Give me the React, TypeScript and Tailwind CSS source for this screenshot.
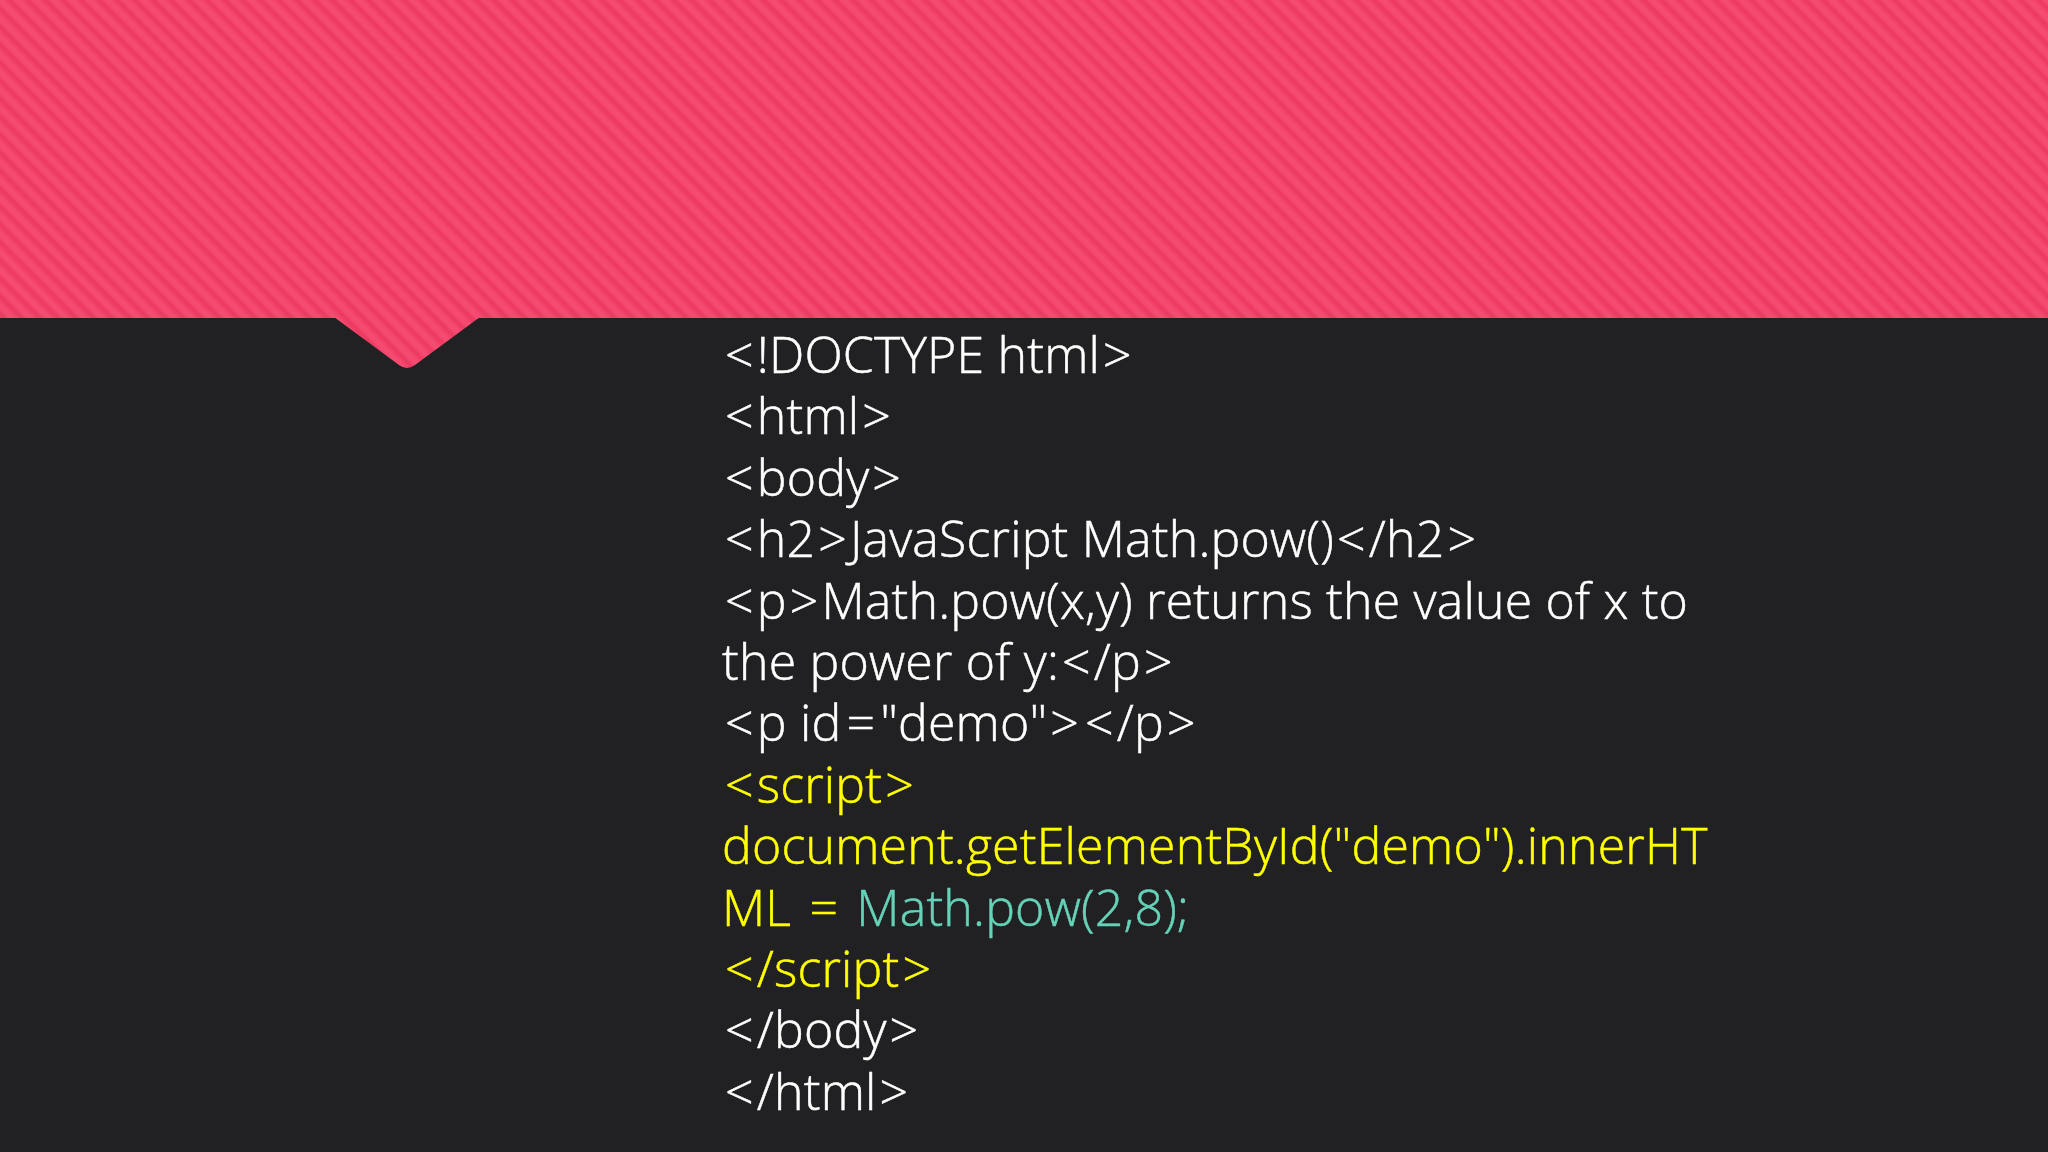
// angle brackets and = sit wider in the original font, so give them some air
function Code({ text }: { text: string }) {
  return (
    <>
      {text.split(/([<>=])/).map((part, i) =>
        part === '=' ? (
          <span key={i} className="px-[5px]">
            {part}
          </span>
        ) : part === '<' || part === '>' ? (
          <span key={i} className="px-[3px]">
            {part}
          </span>
        ) : (
          part
        ),
      )}
    </>
  );
}

export default function App() {
  return (
    <div className="relative flex h-[1152px] w-[2048px] flex-col overflow-hidden bg-[#212124] font-['Open_Sans',sans-serif]">
      <div className="h-[318px] shrink-0 bg-fixed bg-[repeating-linear-gradient(45deg,#f64b71_0px,#f64b71_3px,#ec3a63_8px,#ec3a63_9px,#f64b71_12.7px)]" />
      {/* speech bubble tail under the banner */}
      <div className="absolute left-[334px] top-[317px] h-[53px] w-[146px] bg-fixed bg-[repeating-linear-gradient(45deg,#f64b71_0px,#f64b71_3px,#ec3a63_8px,#ec3a63_9px,#f64b71_12.7px)] [clip-path:path('M0_0L146_0L81_48Q73_54_65_48Z')]" />
      <div className="ml-[722px] w-[1100px] pt-[6px] text-[50px] font-light leading-[61.4px] tracking-[0.2px] text-white whitespace-nowrap [-webkit-text-stroke:0.5px]">
        <div><Code text="<!DOCTYPE html>" /></div>
        <div><Code text="<html>" /></div>
        <div><Code text="<body>" /></div>
        <div><Code text="<h2>JavaScript Math.pow()</h2>" /></div>
        <div><Code text="<p>Math.pow(x,y) returns the value of x to" /></div>
        <div><Code text="the power of y:</p>" /></div>
        <div><Code text='<p id="demo"></p>' /></div>
        <div className="text-[#ffff00]"><Code text="<script>" /></div>
        <div className="text-[#ffff00]">document.getElementById("demo").innerHT</div>
        <div className="text-[#ffff00]">
          ML <Code text="=" /> <span className="text-[#66d2b8]">Math.pow(2,8);</span>
        </div>
        <div className="text-[#ffff00]"><Code text="</script>" /></div>
        <div><Code text="</body>" /></div>
        <div><Code text="</html>" /></div>
      </div>
    </div>
  );
}
